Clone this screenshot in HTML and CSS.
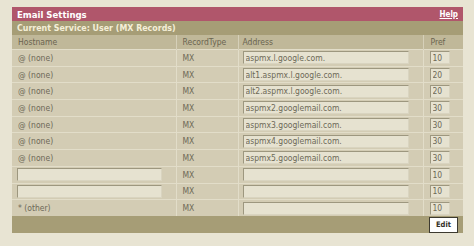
FILE: index.html
```html
<!DOCTYPE html>
<html>
<head>
<meta charset="utf-8">
<link rel="stylesheet" href="styles.css">
</head>
<body>
<div class="panel">
  <div class="titlebar">
    <span class="title">Email Settings</span>
    <a class="help" href="#">Help</a>
  </div>
  <div class="service">Current Service: User (MX Records)</div>
  <table class="grid">
    <colgroup>
      <col class="c-host"><col class="c-type"><col class="c-addr"><col class="c-pref">
    </colgroup>
    <thead>
      <tr class="head">
        <th>Hostname</th><th>RecordType</th><th class="addr">Address</th><th class="pref">Pref</th>
      </tr>
    </thead>
    <tbody>
      <tr><td>@ (none)</td><td>MX</td><td class="addr"><input class="in-addr" value="aspmx.l.google.com."></td><td class="pref"><input class="in-pref" value="10"></td></tr>
      <tr><td>@ (none)</td><td>MX</td><td class="addr"><input class="in-addr" value="alt1.aspmx.l.google.com."></td><td class="pref"><input class="in-pref" value="20"></td></tr>
      <tr><td>@ (none)</td><td>MX</td><td class="addr"><input class="in-addr" value="alt2.aspmx.l.google.com."></td><td class="pref"><input class="in-pref" value="20"></td></tr>
      <tr><td>@ (none)</td><td>MX</td><td class="addr"><input class="in-addr" value="aspmx2.googlemail.com."></td><td class="pref"><input class="in-pref" value="30"></td></tr>
      <tr><td>@ (none)</td><td>MX</td><td class="addr"><input class="in-addr" value="aspmx3.googlemail.com."></td><td class="pref"><input class="in-pref" value="30"></td></tr>
      <tr><td>@ (none)</td><td>MX</td><td class="addr"><input class="in-addr" value="aspmx4.googlemail.com."></td><td class="pref"><input class="in-pref" value="30"></td></tr>
      <tr><td>@ (none)</td><td>MX</td><td class="addr"><input class="in-addr" value="aspmx5.googlemail.com."></td><td class="pref"><input class="in-pref" value="30"></td></tr>
      <tr><td class="hin"><input class="in-host" value=""></td><td>MX</td><td class="addr"><input class="in-addr" value=""></td><td class="pref"><input class="in-pref" value="10"></td></tr>
      <tr><td class="hin"><input class="in-host" value=""></td><td>MX</td><td class="addr"><input class="in-addr" value=""></td><td class="pref"><input class="in-pref" value="10"></td></tr>
      <tr><td>* (other)</td><td>MX</td><td class="addr"><input class="in-addr" value=""></td><td class="pref"><input class="in-pref" value="10"></td></tr>
    </tbody>
  </table>
  <div class="footer">
    <button class="edit">Edit</button>
  </div>
</div>
</body>
</html>
```

FILE: styles.css
```css
html, body {
  margin: 0;
  padding: 0;
}
body {
  background: #e8e4d3;
  font-family: "DejaVu Sans Condensed", "DejaVu Sans", Verdana, sans-serif;
  width: 474px;
  height: 246px;
  overflow: hidden;
}
.panel {
  margin: 7px 0 0 12px;
  width: 451px;
}
.titlebar {
  background: #b0566b;
  height: 14px;
  display: flex;
  align-items: center;
  justify-content: space-between;
  padding: 0 5px 0 5px;
}
.title {
  color: #ffffff;
  font-weight: bold;
  font-size: 9.5px;
}
.help {
  color: #ffffff;
  font-weight: bold;
  font-size: 8px;
  text-decoration: underline;
}
.service {
  background: #a69d76;
  color: #f4efd8;
  font-weight: bold;
  font-size: 8.8px;
  height: 14px;
  line-height: 14px;
  padding-left: 5px;
}
.grid {
  width: 451px;
  border-collapse: collapse;
  table-layout: fixed;
  font-size: 8.5px;
  color: #6d6957;
}
.c-host { width: 164px; }
.c-type { width: 62px; }
.c-addr { width: 185px; }
.c-pref { width: 40px; }
.grid th {
  background: #c0b899;
  color: #6a6450;
  font-weight: normal;
  text-align: left;
  height: 14px;
  padding: 0 0 0 6px;
  border-left: 1px solid #d6d0b9;
}
.grid th:first-child, .grid td:first-child { border-left: none; }
.grid td {
  background: #d3ccb4;
  height: 16.7px;
  padding: 0 0 0 6px;
  border-left: 1px solid #e2ddc9;
  border-top: 1px solid #e2ddc9;
  box-sizing: border-box;
  white-space: nowrap;
}
.grid th.addr, .grid td.addr { padding-left: 4px; }
.grid th.pref { padding-left: 7px; }
.grid td.pref { padding-left: 6px; }
.grid td.hin { padding-left: 5px; }
input {
  box-sizing: border-box;
  height: 13px;
  margin: 0;
  display: block;
  background: #e6e2d0;
  border: 1px solid;
  border-color: #9d977f #d9d4c0 #d9d4c0 #9d977f;
  font-family: inherit;
  font-size: 8.5px;
  color: #6d6957;
  padding: 0 2px;
  outline: none;
}
.in-addr { width: 166px; }
.in-pref { width: 20px; }
.in-host { width: 145px; }
.footer {
  background: #a69d76;
  height: 17px;
  display: flex;
  align-items: center;
  justify-content: flex-end;
  padding-right: 5px;
}
.edit {
  box-sizing: border-box;
  width: 29px;
  height: 16px;
  background: #ffffff;
  border: 1px solid #3d3a30;
  font-family: inherit;
  font-weight: bold;
  font-size: 7.5px;
  color: #333026;
  padding: 0;
}
```
